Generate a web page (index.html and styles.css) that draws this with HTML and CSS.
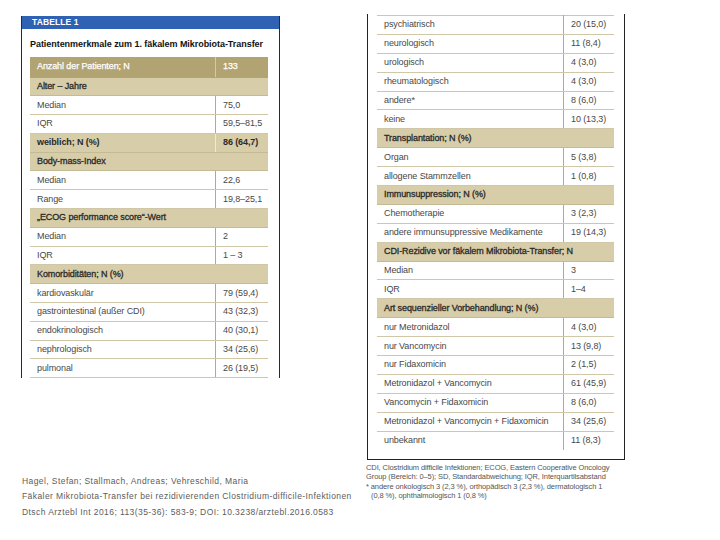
FILE: index.html
```html
<!DOCTYPE html>
<html lang="de">
<head>
<meta charset="utf-8">
<title>Tabelle 1</title>
<link rel="stylesheet" href="styles.css">
</head>
<body>
<div class="page">
  <div class="col-left">
    <div class="card">
      <div class="card-head">TABELLE 1</div>
      <div class="card-body">
        <div class="card-title">Patientenmerkmale zum 1. fäkalem Mikrobiota-Transfer</div>
        <table class="data data-left">
          <tr class="head"><td>Anzahl der Patienten; N</td><td>133</td></tr>
          <tr class="sec"><td colspan="2">Alter – Jahre</td></tr>
          <tr><td>Median</td><td>75,0</td></tr>
          <tr><td>IQR</td><td>59,5–81,5</td></tr>
          <tr class="sec strong"><td>weiblich; N (%)</td><td>86 (64,7)</td></tr>
          <tr class="sec"><td colspan="2">Body-mass-Index</td></tr>
          <tr><td>Median</td><td>22,6</td></tr>
          <tr><td>Range</td><td>19,8–25,1</td></tr>
          <tr class="sec"><td colspan="2">„ECOG performance score“-Wert</td></tr>
          <tr><td>Median</td><td>2</td></tr>
          <tr><td>IQR</td><td>1 – 3</td></tr>
          <tr class="sec"><td colspan="2">Komorbiditäten; N (%)</td></tr>
          <tr><td>kardiovaskulär</td><td>79 (59,4)</td></tr>
          <tr><td>gastrointestinal (außer CDI)</td><td>43 (32,3)</td></tr>
          <tr><td>endokrinologisch</td><td>40 (30,1)</td></tr>
          <tr><td>nephrologisch</td><td>34 (25,6)</td></tr>
          <tr><td>pulmonal</td><td>26 (19,5)</td></tr>
        </table>
      </div>
    </div>
    <div class="citation">
      <div>Hagel, Stefan; Stallmach, Andreas; Vehreschild, Maria</div>
      <div>Fäkaler Mikrobiota-Transfer bei rezidivierenden Clostridium-difficile-Infektionen</div>
      <div>Dtsch Arztebl Int 2016; 113(35-36): 583-9; DOI: 10.3238/arztebl.2016.0583</div>
    </div>
  </div>
  <div class="col-right">
    <div class="frame">
      <table class="data data-right">
        <tr><td>psychiatrisch</td><td>20 (15,0)</td></tr>
        <tr><td>neurologisch</td><td>11 (8,4)</td></tr>
        <tr><td>urologisch</td><td>4 (3,0)</td></tr>
        <tr><td>rheumatologisch</td><td>4 (3,0)</td></tr>
        <tr><td>andere*</td><td>8 (6,0)</td></tr>
        <tr><td>keine</td><td>10 (13,3)</td></tr>
        <tr class="sec"><td colspan="2">Transplantation; N (%)</td></tr>
        <tr><td>Organ</td><td>5 (3,8)</td></tr>
        <tr><td>allogene Stammzellen</td><td>1 (0,8)</td></tr>
        <tr class="sec"><td colspan="2">Immunsuppression; N (%)</td></tr>
        <tr><td>Chemotherapie</td><td>3 (2,3)</td></tr>
        <tr><td>andere immunsuppressive Medikamente</td><td>19 (14,3)</td></tr>
        <tr class="sec"><td colspan="2">CDI-Rezidive vor fäkalem Mikrobiota-Transfer; N</td></tr>
        <tr><td>Median</td><td>3</td></tr>
        <tr><td>IQR</td><td>1–4</td></tr>
        <tr class="sec"><td colspan="2">Art sequenzieller Vorbehandlung; N (%)</td></tr>
        <tr><td>nur Metronidazol</td><td>4 (3,0)</td></tr>
        <tr><td>nur Vancomycin</td><td>13 (9,8)</td></tr>
        <tr><td>nur Fidaxomicin</td><td>2 (1,5)</td></tr>
        <tr><td>Metronidazol + Vancomycin</td><td>61 (45,9)</td></tr>
        <tr><td>Vancomycin + Fidaxomicin</td><td>8 (6,0)</td></tr>
        <tr><td>Metronidazol + Vancomycin + Fidaxomicin</td><td>34 (25,6)</td></tr>
        <tr class="last"><td>unbekannt</td><td>11 (8,3)</td></tr>
      </table>
    </div>
    <div class="footnote">
      <div>CDI, Clostridium difficile Infektionen; ECOG, Eastern Cooperative Oncology</div>
      <div>Group (Bereich: 0–5); SD, Standardabweichung; IQR, Interquartilsabstand</div>
      <div>* andere onkologisch 3 (2,3 %), orthopädisch 3 (2,3 %), dermatologisch 1</div>
      <div class="indent">(0,8 %), ophthalmologisch 1 (0,8 %)</div>
    </div>
  </div>
</div>
</body>
</html>
```

FILE: styles.css
```css
html, body {
  margin: 0;
  padding: 0;
  background: #ffffff;
}

body {
  font-family: "Liberation Sans", Arial, sans-serif;
  color: #444;
}

.page {
  display: flex;
  height: 540px;
  overflow: hidden;
}

/* ---------- left column ---------- */
.col-left {
  width: 259px;
  margin-left: 21px;
  padding-top: 16px;
  display: flex;
  flex-direction: column;
}

.card {
  height: 362px;
  overflow: hidden;
  border-left: 1px solid #2a2a2a;
  border-right: 1px solid #2a2a2a;
  box-sizing: border-box;
  background: #fff;
}

.card-head {
  height: 13px;
  margin: 0 -1px;
  padding-left: 11px;
  background: #2f62b3;
  color: #fff;
  font-weight: bold;
  font-size: 8.5px;
  line-height: 13px;
  letter-spacing: 0.1px;
}

.card-body {
  padding: 0 10px 0 8px;
}

.card-title {
  height: 28px;
  padding-top: 9px;
  box-sizing: border-box;
  font-weight: bold;
  font-size: 9px;
  line-height: 12px;
  letter-spacing: -0.05px;
  color: #111;
  white-space: nowrap;
}

/* ---------- tables ---------- */
.data {
  border-collapse: collapse;
  table-layout: fixed;
  font-size: 9px;
  letter-spacing: -0.1px;
  color: #484848;
}

.data td {
  padding: 0 0 0 7px;
  border-bottom: 1px solid #cfc7a8;
  white-space: nowrap;
  vertical-align: middle;
  line-height: 11px;
}

.data td:first-child:not([colspan]) {
  border-right: 1px solid #b4aa88;
}

.data td + td {
  padding-left: 7px;
}

.data-left {
  width: 238px;
}

.data-left td:first-child {
  width: 178px;
}

.data-left tr {
  height: 18.8px;
}

.data-left tr.head {
  height: 20px;
}

.data tr.head td {
  background: #b2a372;
  color: #fff;
  -webkit-text-stroke: 0.25px #fff;
  border-bottom: 1px solid #b2a372;
}

.data tr.head td:first-child {
  border-right: 1px solid #d4caa4;
}

.data tr.sec td {
  background: #d7cda8;
  color: #2a2a2a;
  -webkit-text-stroke: 0.3px #2a2a2a;
  border-bottom: 1px solid #c4ba96;
}

.data tr.sec.strong td {
  font-weight: bold;
  -webkit-text-stroke: 0;
}

.data tr.sec td:first-child:not([colspan]) {
  border-right: 1px solid #efe9d5;
}

/* ---------- right column ---------- */
.col-right {
  width: 258px;
  margin-left: 87px;
  padding-top: 14px;
  display: flex;
  flex-direction: column;
}

.frame {
  border: 1px solid #222;
  border-top: 0;
  padding: 1px 11px 9px 9px;
}

.data-right {
  width: 237px;
  border-top: 1px solid #cfc7a8;
}

.data-right td:first-child {
  width: 179px;
}

.data-right tr {
  height: 18.9px;
}

.data-right tr.last td {
  border-bottom: 0;
}

.footnote {
  margin-top: 3px;
  margin-left: -1px;
  font-size: 7.5px;
  line-height: 9.4px;
  color: #555;
  letter-spacing: -0.1px;
  white-space: nowrap;
}

.footnote .indent {
  padding-left: 5px;
}

/* ---------- citation ---------- */
.citation {
  margin-top: auto;
  margin-left: 1px;
  padding-bottom: 20px;
  font-size: 8.5px;
  line-height: 15.5px;
  letter-spacing: 0.42px;
  color: #5c5c5c;
  white-space: nowrap;
}
```
